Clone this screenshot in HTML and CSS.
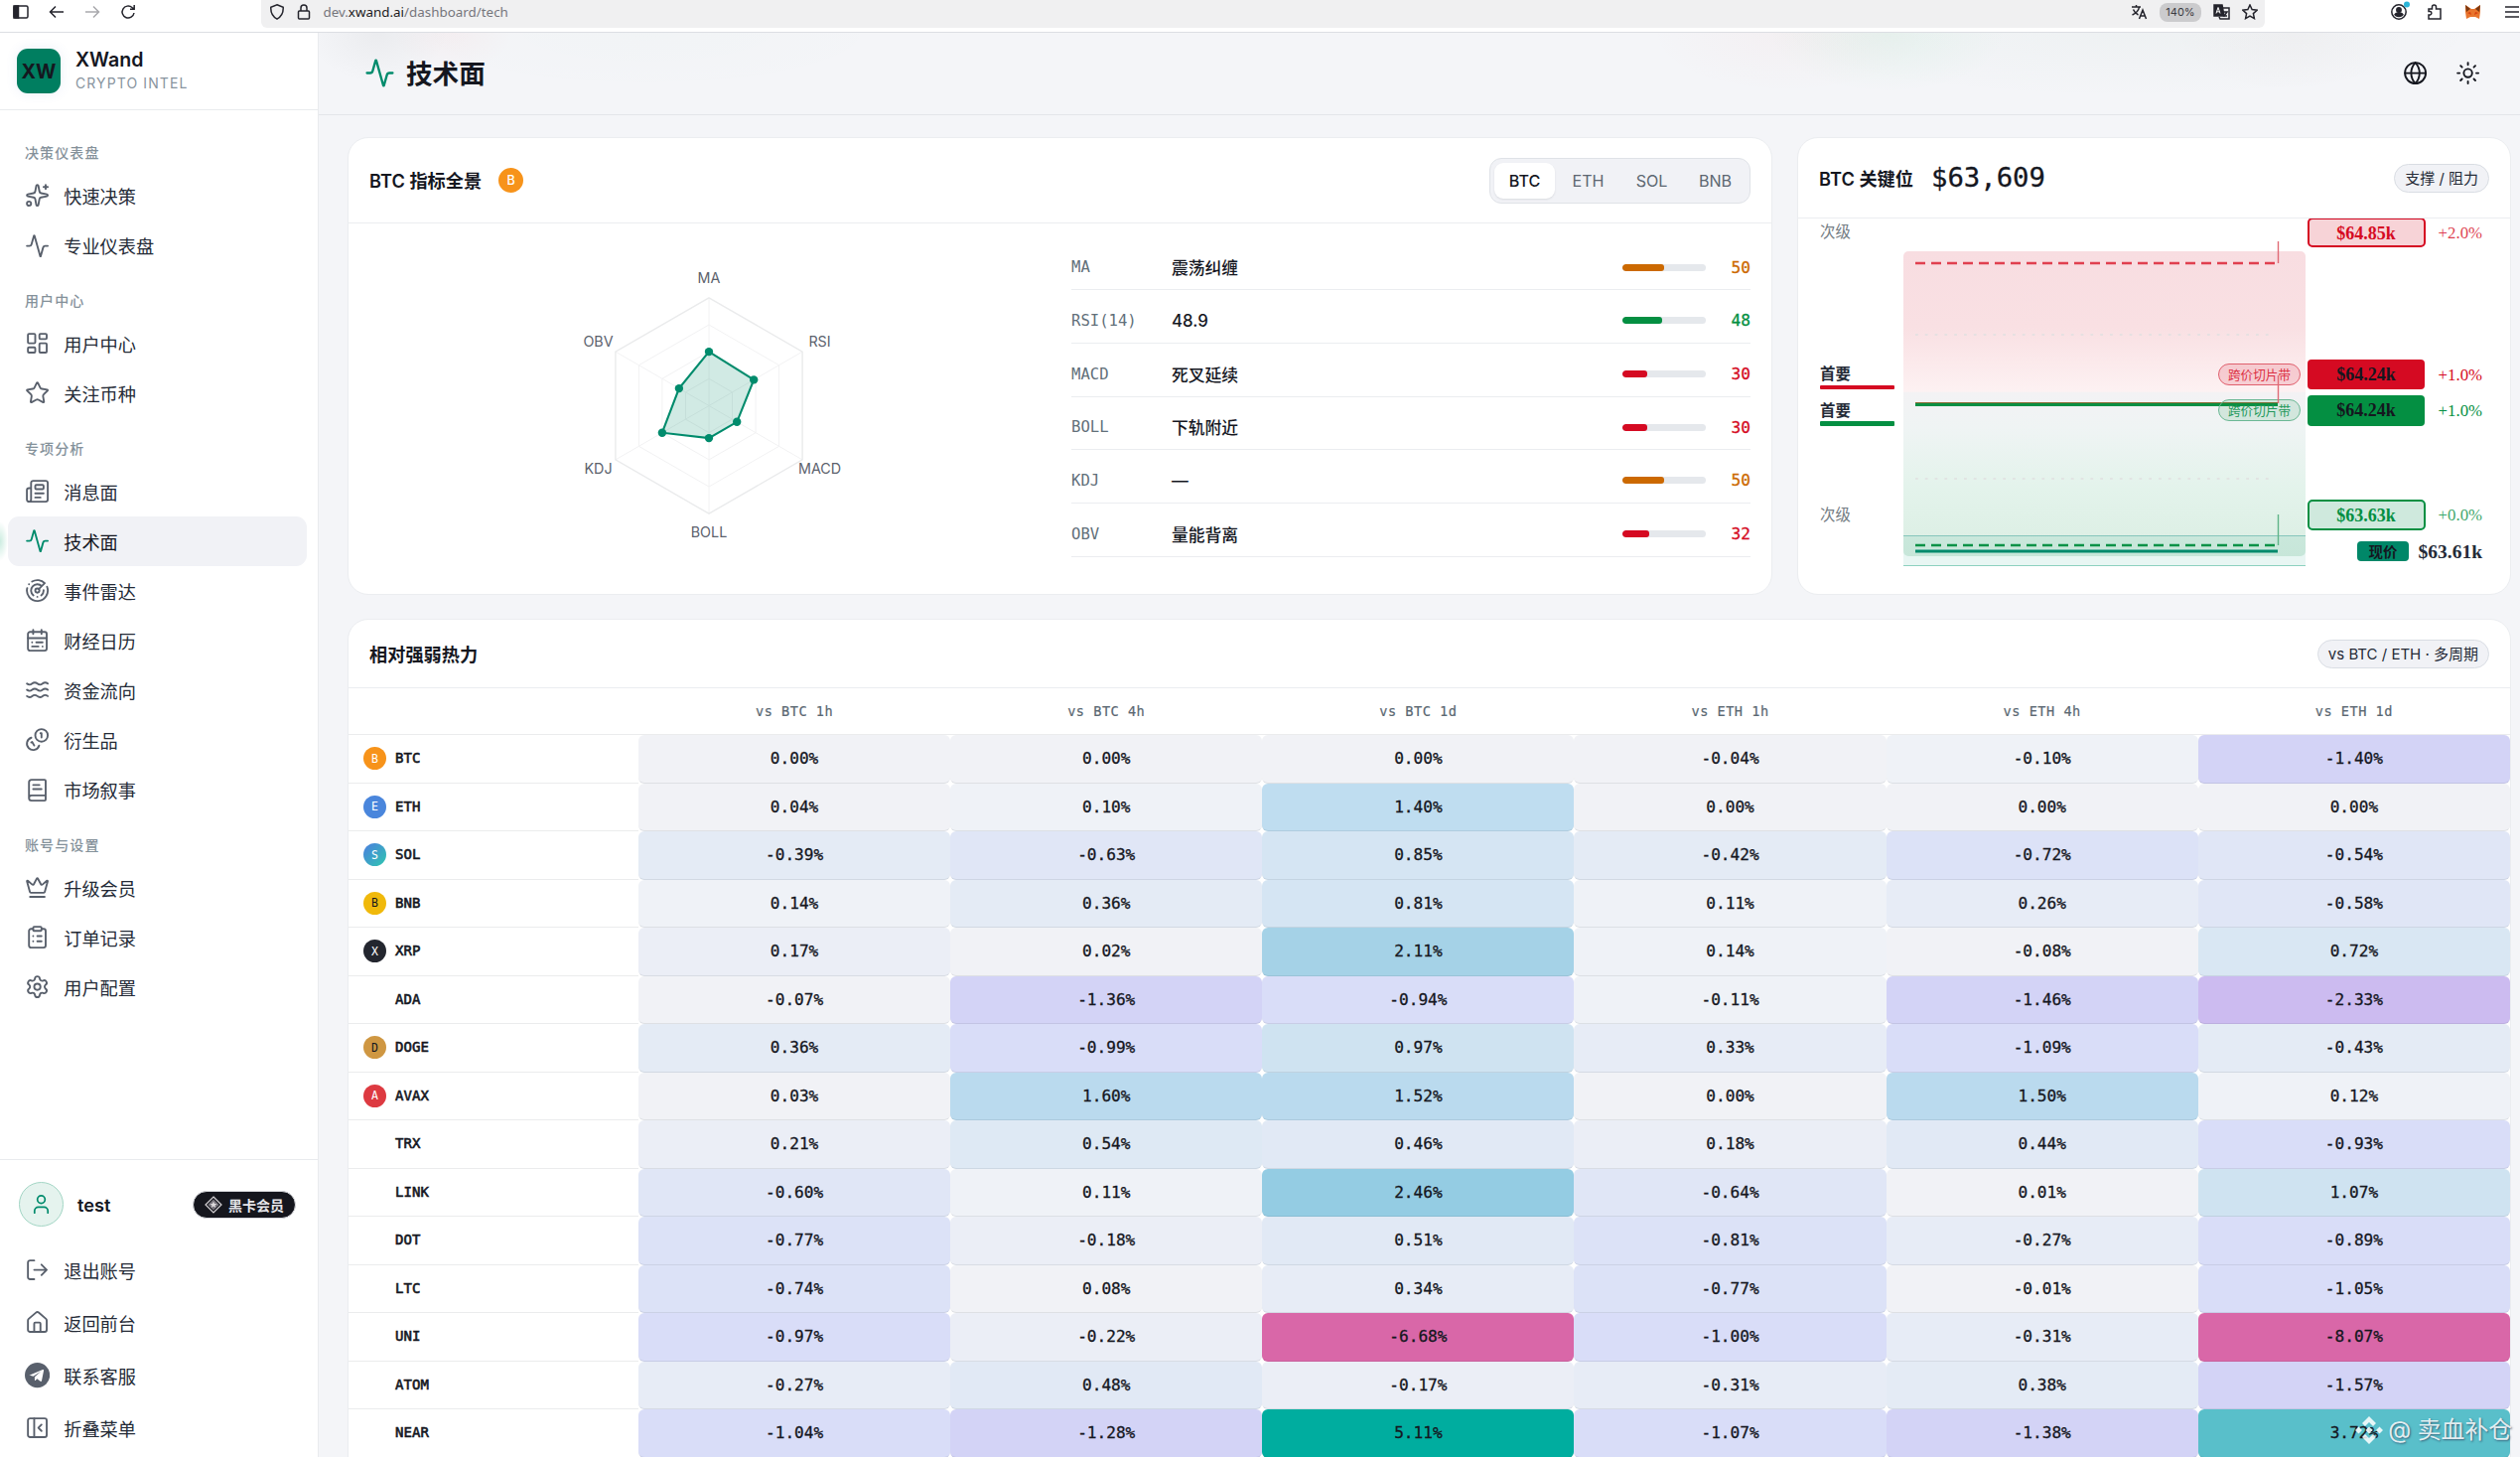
FILE: index.html
```html
<!DOCTYPE html>
<html lang="zh-CN">
<head>
    <meta charset="UTF-8">
    <meta name="viewport" content="width=device-width, initial-scale=1.0">
    <title>XWand - 技术面</title>
    <link rel="stylesheet" href="styles.css">
</head>
<body>
    <div class="browser-bar">
        <div class="browser-nav">
            <svg width="16" height="14" viewBox="0 0 16 14"><rect x="1" y="1" width="14" height="12" rx="1.5"/><path class="solid" d="M1 1h4.5v12H1z"/></svg>
            <svg width="16" height="14" viewBox="0 0 16 14"><path d="M15 7H1.5M7 1.5L1.5 7 7 12.5"/></svg>
            <svg class="muted" width="16" height="14" viewBox="0 0 16 14"><path d="M1 7h13.500M9 1.500L14.500 7 9 12.500"/></svg>
            <svg width="16" height="16" viewBox="0 0 16 16"><path d="M14 9a6 6 0 1 1-2-5.500l2 1.500M14.200 1v4.200H10"/></svg>
        </div>
        <div class="url-field">
            <svg width="16" height="16" viewBox="0 0 16 16"><path d="M8 .8l6.200 2.400c.3 5-1.500 9.500-6.200 12C3.300 12.700 1.500 8.200 1.800 3.200z"/></svg>
            <svg width="14" height="16" viewBox="0 0 14 16"><rect x="1.500" y="7" width="11" height="8" rx="1"/><path d="M4 7V4a3 3 0 0 1 6 0v3"/></svg>
            <span class="url">dev.<b>xwand.ai</b>/dashboard/tech</span>
            <div class="url-tools">
                <svg width="17" height="16" viewBox="0 0 17 16"><path d="M1 3h9M5.500 1v2M8.500 3C8 6 5 9.500 1.500 11M2.500 5.500c1 2.500 3 4.500 5 5.500M8.500 15l3.500-9 3.500 9M9.800 12h4.500"/></svg>
                <span class="zoom-level">140%</span>
                <svg width="17" height="16" viewBox="0 0 17 16"><path class="solid" d="M1 1h8l2 11H1z"/><path d="M9 4h7v11H7l-1-2"/><path d="M11 8h3l-3 4h3"/><path class="light" d="M3 9.500l2-6 2 6M3.600 7.800h2.800"/></svg>
                <svg width="16" height="16" viewBox="0 0 16 16"><path d="M8 1l2.100 4.600 5 .6-3.700 3.400 1 5L8 12.100 3.600 14.600l1-5L.9 6.200l5-.6z"/></svg>
            </div>
        </div>
        <div class="browser-ext">
            <svg width="19" height="20" viewBox="0 0 19 20"><circle cx="8" cy="11" r="7.200"/><circle class="solid" cx="8" cy="9" r="2.200"/><path class="solid" d="M4 13.500c1-2 7-2 8 0-1 2.500-7 2.500-8 0z"/><circle class="dot" cx="16" cy="3.500" r="3"/></svg>
            <svg width="14" height="16" viewBox="0 0 14 16"><path d="M1 5h3.500V3a2 2 0 0 1 4 0v2H13v10H1v-4h1.500a1.800 1.800 0 0 0 0-3.500H1z"/></svg>
            <svg class="fox" width="17" height="16" viewBox="0 0 17 16"><path fill="#e8752d" d="M1 1l6 4h3l6-4v7l-1 7-4-2H6l-4 2-1-7z"/><path fill="#7a3a14" d="M1 1l5 4-4 3zM16 1l-5 4 4 3z"/><path fill="#d7410f" d="M3 9l3-1 1 3zM14 9l-3-1-1 3z"/></svg>
            <svg width="16" height="14" viewBox="0 0 16 14"><path d="M1 2h14M1 7h14M1 12h14"/></svg>
        </div>
    </div>

    <div class="app">
        <aside class="sidebar">
            <div class="brand">
                <div class="brand-logo">XW</div>
                <div class="brand-text">
                    <div class="brand-name">XWand</div>
                    <div class="brand-sub">CRYPTO INTEL</div>
                </div>
            </div>

            <nav class="nav">
                <div class="nav-label">决策仪表盘</div>
                <a class="nav-item"><svg class="icon" viewBox="0 0 24 24"><path d="M11.017 2.814a1 1 0 0 1 1.966 0l1.051 5.558a2 2 0 0 0 1.594 1.594l5.558 1.051a1 1 0 0 1 0 1.966l-5.558 1.051a2 2 0 0 0-1.594 1.594l-1.051 5.558a1 1 0 0 1-1.966 0l-1.051-5.558a2 2 0 0 0-1.594-1.594l-5.558-1.051a1 1 0 0 1 0-1.966l5.558-1.051a2 2 0 0 0 1.594-1.594zM20 2v4M22 4h-4"/><circle cx="4" cy="20" r="2"/></svg>快速决策</a>
                <a class="nav-item"><svg class="icon" viewBox="0 0 24 24"><path d="M22 12h-2.480a2 2 0 0 0-1.930 1.460l-2.350 8.360a.25.25 0 0 1-.48 0L9.240 2.180a.25.25 0 0 0-.48 0l-2.350 8.360A2 2 0 0 1 4.490 12H2"/></svg>专业仪表盘</a>

                <div class="nav-label">用户中心</div>
                <a class="nav-item"><svg class="icon" viewBox="0 0 24 24"><rect width="7" height="9" x="3" y="3" rx="1"/><rect width="7" height="5" x="14" y="3" rx="1"/><rect width="7" height="9" x="14" y="12" rx="1"/><rect width="7" height="5" x="3" y="16" rx="1"/></svg>用户中心</a>
                <a class="nav-item"><svg class="icon" viewBox="0 0 24 24"><path d="M11.525 2.295a.53.53 0 0 1 .95 0l2.310 4.679a2.123 2.123 0 0 0 1.595 1.160l5.166.756a.53.53 0 0 1 .294.904l-3.736 3.638a2.123 2.123 0 0 0-.611 1.878l.882 5.140a.53.53 0 0 1-.771.560l-4.618-2.428a2.122 2.122 0 0 0-1.973 0L6.396 21.010a.53.53 0 0 1-.770-.560l.881-5.139a2.122 2.122 0 0 0-.611-1.879L2.160 9.795a.53.53 0 0 1 .294-.906l5.165-.755a2.122 2.122 0 0 0 1.597-1.160z"/></svg>关注币种</a>

                <div class="nav-label">专项分析</div>
                <a class="nav-item"><svg class="icon" viewBox="0 0 24 24"><path d="M15 18h-5M18 14h-8M4 22h16a2 2 0 0 0 2-2V4a2 2 0 0 0-2-2H8a2 2 0 0 0-2 2v16a2 2 0 0 1-4 0v-9a2 2 0 0 1 2-2h2"/><rect width="8" height="4" x="10" y="6" rx="1"/></svg>消息面</a>
                <a class="nav-item active"><svg class="icon" viewBox="0 0 24 24"><path d="M22 12h-2.480a2 2 0 0 0-1.930 1.460l-2.350 8.360a.25.25 0 0 1-.48 0L9.240 2.180a.25.25 0 0 0-.48 0l-2.350 8.360A2 2 0 0 1 4.490 12H2"/></svg>技术面</a>
                <a class="nav-item"><svg class="icon" viewBox="0 0 24 24"><path d="M19.070 4.930A10 10 0 0 0 6.990 3.340M4 6h.01M2.290 9.620A10 10 0 1 0 21.310 8.350M16.240 7.760A6 6 0 1 0 8.230 16.670M12 18h.01M17.990 11.660A6 6 0 0 1 15.770 16.670M13.410 10.590l5.660-5.660"/><circle cx="12" cy="12" r="2"/></svg>事件雷达</a>
                <a class="nav-item"><svg class="icon" viewBox="0 0 24 24"><rect width="18" height="18" x="3" y="4" rx="2"/><path d="M16 2v4M3 10h18M8 2v4M17 14h-6M13 18H7M7 14h.01M17 18h.01"/></svg>财经日历</a>
                <a class="nav-item"><svg class="icon" viewBox="0 0 24 24"><path d="M2 6c.6.5 1.200 1 2.500 1C7 7 7 5 9.500 5c2.600 0 2.400 2 5 2 2.500 0 2.500-2 5-2 1.300 0 1.900.5 2.500 1M2 12c.6.5 1.200 1 2.500 1 2.500 0 2.500-2 5-2 2.600 0 2.400 2 5 2 2.500 0 2.500-2 5-2 1.300 0 1.900.5 2.500 1M2 18c.6.5 1.200 1 2.500 1 2.500 0 2.500-2 5-2 2.600 0 2.400 2 5 2 2.500 0 2.500-2 5-2 1.300 0 1.900.5 2.500 1"/></svg>资金流向</a>
                <a class="nav-item"><svg class="icon" viewBox="0 0 24 24"><path d="M13.744 17.736a6 6 0 1 1-7.480-7.480M15 6h1v4M6.134 14.768l.866-.5 2 3.464"/><circle cx="16" cy="8" r="6"/></svg>衍生品</a>
                <a class="nav-item"><svg class="icon" viewBox="0 0 24 24"><path d="M4 19.500v-15A2.500 2.500 0 0 1 6.500 2H19a1 1 0 0 1 1 1v18a1 1 0 0 1-1 1H6.500a1 1 0 0 1 0-5H20M8 11h8M8 7h6"/></svg>市场叙事</a>

                <div class="nav-label">账号与设置</div>
                <a class="nav-item"><svg class="icon" viewBox="0 0 24 24"><path d="M11.562 3.266a.5.5 0 0 1 .876 0L15.390 8.870a1 1 0 0 0 1.516.294L21.183 5.500a.5.5 0 0 1 .798.519l-2.834 10.246a1 1 0 0 1-.956.734H5.810a1 1 0 0 1-.957-.734L2.020 6.020a.5.5 0 0 1 .798-.519l4.276 3.664a1 1 0 0 0 1.516-.294zM5 21h14"/></svg>升级会员</a>
                <a class="nav-item"><svg class="icon" viewBox="0 0 24 24"><rect width="8" height="4" x="8" y="2" rx="1"/><path d="M16 4h2a2 2 0 0 1 2 2v14a2 2 0 0 1-2 2H6a2 2 0 0 1-2-2V6a2 2 0 0 1 2-2h2M12 11h4M12 16h4M8 11h.01M8 16h.01"/></svg>订单记录</a>
                <a class="nav-item"><svg class="icon" viewBox="0 0 24 24"><path d="M9.671 4.136a2.340 2.340 0 0 1 4.659 0 2.340 2.340 0 0 0 3.319 1.915 2.340 2.340 0 0 1 2.330 4.033 2.340 2.340 0 0 0 0 3.831 2.340 2.340 0 0 1-2.330 4.033 2.340 2.340 0 0 0-3.319 1.915 2.340 2.340 0 0 1-4.659 0 2.340 2.340 0 0 0-3.320-1.915 2.340 2.340 0 0 1-2.330-4.033 2.340 2.340 0 0 0 0-3.831A2.340 2.340 0 0 1 6.350 6.051a2.340 2.340 0 0 0 3.319-1.915"/><circle cx="12" cy="12" r="3"/></svg>用户配置</a>
            </nav>

            <div class="sidebar-footer">
                <div class="user">
                    <div class="avatar"><svg class="icon" viewBox="0 0 24 24"><path d="M19 21v-2a4 4 0 0 0-4-4H9a4 4 0 0 0-4 4v2"/><circle cx="12" cy="7" r="4"/></svg></div>
                    <span class="user-name">test</span>
                    <span class="member-badge"><svg width="18" height="18" viewBox="0 0 18 18"><path fill="none" stroke="#d6d3d6" stroke-width="1.200" d="M9 1l8 8-8 8-8-8z"/><path fill="#77737c" d="M9 3.500L14.500 9 9 14.500 3.500 9z"/><path fill="#dedbdd" d="M9 5.500l1 2.500h2.500l-2 1.500.8 2.500L9 10.500 6.700 12l.8-2.500-2-1.500H8z"/></svg>黑卡会员</span>
                </div>
                <a class="nav-item"><svg class="icon" viewBox="0 0 24 24"><path d="M16 17l5-5-5-5M21 12H9M9 21H5a2 2 0 0 1-2-2V5a2 2 0 0 1 2-2h4"/></svg>退出账号</a>
                <a class="nav-item"><svg class="icon" viewBox="0 0 24 24"><path d="M15 21v-8a1 1 0 0 0-1-1h-4a1 1 0 0 0-1 1v8"/><path d="M3 10a2 2 0 0 1 .709-1.528l7-6a2 2 0 0 1 2.582 0l7 6A2 2 0 0 1 21 10v9a2 2 0 0 1-2 2H5a2 2 0 0 1-2-2z"/></svg>返回前台</a>
                <a class="nav-item"><svg class="icon icon-telegram" viewBox="0 0 24 24"><circle cx="12" cy="12" r="12"/><path d="M4.800 11.800l12.400-5.100c.7-.3 1.100.1 1 .8l-2 9.800c-.2.8-.7.9-1.300.6l-3.200-2.400-1.600 1.600c-.3.3-.6.2-.6-.3l-.1-2.900 6-5.500-7.300 4.700-3.300-1c-.6-.1-.6-.1 0-.3z"/></svg>联系客服</a>
                <a class="nav-item"><svg class="icon" viewBox="0 0 24 24"><rect width="18" height="18" x="3" y="3" rx="2"/><path d="M9 3v18M16 15l-3-3 3-3"/></svg>折叠菜单</a>
            </div>
        </aside>

        <main class="main">
            <header class="page-header">
                <svg class="icon title-icon" viewBox="0 0 24 24"><path d="M22 12h-2.480a2 2 0 0 0-1.930 1.460l-2.350 8.360a.25.25 0 0 1-.48 0L9.240 2.180a.25.25 0 0 0-.48 0l-2.350 8.360A2 2 0 0 1 4.490 12H2"/></svg>
                <h1>技术面</h1>
                <div class="header-actions">
                    <svg class="icon" viewBox="0 0 24 24"><circle cx="12" cy="12" r="10"/><path d="M12 2a14.500 14.500 0 0 0 0 20 14.500 14.500 0 0 0 0-20M2 12h20"/></svg>
                    <svg class="icon" viewBox="0 0 24 24"><circle cx="12" cy="12" r="4"/><path d="M12 2v2M12 20v2M4.930 4.930l1.410 1.410M17.660 17.660l1.410 1.410M2 12h2M20 12h2M6.340 17.660l-1.410 1.410M19.070 4.930l-1.410 1.410"/></svg>
                </div>
            </header>

            <div class="content">
                <section class="card overview-card">
                    <div class="card-header">
                        <h2>BTC 指标全景</h2>
                        <span class="coin coin-lg btc">B</span>
                        <div class="tabs">
                            <span class="tab active">BTC</span>
                            <span class="tab">ETH</span>
                            <span class="tab">SOL</span>
                            <span class="tab">BNB</span>
                        </div>
                    </div>
                    <div class="overview-body">
                        <svg class="radar" viewBox="-363 -183.500 728 375">
                            <g class="radar-grid">
                                <path d="M0-27.200L23.500-13.600V13.600L0 27.200-23.500 13.600V-13.600zM0-54.400L47.100-27.200V27.200L0 54.400-47.100 27.200V-27.200zM0-81.500L70.600-40.800V40.800L0 81.500-70.600 40.800V-40.800z"/>
                                <path d="M0-108.700V108.700M-94.100-54.400L94.100 54.400M-94.100 54.400L94.100-54.400"/>
                                <path class="outer" d="M0-108.700L94.100-54.400V54.400L0 108.700-94.100 54.400V-54.400z"/>
                            </g>
                            <path class="radar-area" d="M0-54.400L45.200-26.100 28.200 16.300 0 32.600-47.100 27.200-30.100-17.400z"/>
                            <g class="radar-dots">
                                <circle cx="0" cy="-54.400" r="4.200"/><circle cx="45.200" cy="-26.100" r="4.200"/><circle cx="28.200" cy="16.300" r="4.200"/>
                                <circle cx="0" cy="32.600" r="4.200"/><circle cx="-47.100" cy="27.200" r="4.200"/><circle cx="-30.100" cy="-17.400" r="4.200"/>
                            </g>
                            <g class="radar-labels">
                                <text x="0" y="-124">MA</text><text x="111.500" y="-59.800">RSI</text><text x="111.500" y="68.500">MACD</text>
                                <text x="0" y="132">BOLL</text><text x="-111.500" y="68.500">KDJ</text><text x="-111.500" y="-59.800">OBV</text>
                            </g>
                        </svg>
                        <div class="indicators">
                            <div class="indicator mid"><span class="ind-name">MA</span><span class="ind-value">震荡纠缠</span><span class="ind-bar"><i style="width: 50%"></i></span><span class="ind-score">50</span></div>
                            <div class="indicator up"><span class="ind-name">RSI(14)</span><span class="ind-value">48.9</span><span class="ind-bar"><i style="width: 48%"></i></span><span class="ind-score">48</span></div>
                            <div class="indicator down"><span class="ind-name">MACD</span><span class="ind-value">死叉延续</span><span class="ind-bar"><i style="width: 30%"></i></span><span class="ind-score">30</span></div>
                            <div class="indicator down"><span class="ind-name">BOLL</span><span class="ind-value">下轨附近</span><span class="ind-bar"><i style="width: 30%"></i></span><span class="ind-score">30</span></div>
                            <div class="indicator mid"><span class="ind-name">KDJ</span><span class="ind-value">—</span><span class="ind-bar"><i style="width: 50%"></i></span><span class="ind-score">50</span></div>
                            <div class="indicator down"><span class="ind-name">OBV</span><span class="ind-value">量能背离</span><span class="ind-bar"><i style="width: 32%"></i></span><span class="ind-score">32</span></div>
                        </div>
                    </div>
                </section>

                <section class="card levels-card">
                    <div class="card-header">
                        <h2>BTC 关键位</h2>
                        <span class="price">$63,609</span>
                        <span class="pill">支撑 / 阻力</span>
                    </div>
                    <svg class="levels" viewBox="0 0 716 379">
                        <defs>
                            <linearGradient id="zone" x1="0" y1="0" x2="0" y2="1">
                                <stop offset="0" stop-color="#f8dde1"/>
                                <stop offset=".25" stop-color="#f9e0e3"/>
                                <stop offset=".46" stop-color="#fdf1f2"/>
                                <stop offset=".463" stop-color="#f3f2f4"/>
                                <stop offset=".58" stop-color="#eff4f4"/>
                                <stop offset=".78" stop-color="#e3f3eb"/>
                                <stop offset="1" stop-color="#dbeee3"/>
                            </linearGradient>
                        </defs>
                        <rect x="106" y="33" width="405" height="307" rx="5" fill="url(#zone)"/>
                        <rect x="106" y="319.500" width="405" height="30" fill="#009878" fill-opacity=".09"/>
                        <path d="M106 319.500h405" stroke="#85c5bb"/>
                        <path d="M106 349.500h405" stroke="#8ed1c0"/>
                        <path d="M118 117h360M118 262h360" stroke="#dfdfe0" stroke-width="1.400" stroke-dasharray="2.800 7"/>
                        <path d="M118 45h365" stroke="#e0404f" stroke-width="2.600" stroke-dasharray="10 6"/>
                        <path d="M118 187h365" stroke="#8b6b35" stroke-width="4"/>
                        <path d="M118 187.500h365" stroke="#0a8f43" stroke-width="3"/>
                        <path d="M118 329h365" stroke="#0a9247" stroke-width="2.400" stroke-dasharray="10 6"/>
                        <path d="M118 335h365" stroke="#008a6c" stroke-width="3"/>

                        <g class="tag red"><rect x="423.500" y="146.500" width="82" height="21" rx="10.500"/><text x="464.500" y="162">跨价切片带</text></g>
                        <g class="tag green"><rect x="423.500" y="182.500" width="82" height="21" rx="10.500"/><text x="464.500" y="198">跨价切片带</text></g>
                        <path d="M483.500 23v22M483.500 158v28" stroke="#e06a75" stroke-width="1.400"/>
                        <path d="M483.500 298v31" stroke="#5fb488" stroke-width="1.400"/>

                        <text class="tier" x="22" y="19">次级</text>
                        <text class="tier main" x="22" y="162">首要</text>
                        <rect x="22" y="168" width="75" height="4" rx="1" fill="#d50a22"/>
                        <text class="tier main" x="22" y="199">首要</text>
                        <rect x="22" y="204" width="75" height="5" rx="1" fill="#048f42"/>
                        <text class="tier" x="22" y="304">次级</text>

                        <rect x="514" y="0" width="117" height="28" rx="4" fill="#f7d3d7" stroke="#d50a22" stroke-width="2"/>
                        <rect x="513" y="142" width="118" height="30" rx="4" fill="#d50a22"/>
                        <rect x="513" y="178" width="118" height="31" rx="4" fill="#048f42"/>
                        <rect x="514" y="284" width="117" height="29" rx="4" fill="#cfe9dd" stroke="#048f42" stroke-width="2"/>
                        <g class="level-price">
                            <text class="resist" x="572" y="21">$64.85k</text>
                            <text x="572" y="163">$64.24k</text>
                            <text x="572" y="199">$64.24k</text>
                            <text class="support" x="572" y="305">$63.63k</text>
                        </g>
                        <g class="level-change">
                            <text class="resist minor" x="689" y="20">+2.0%</text>
                            <text class="resist" x="689" y="163">+1.0%</text>
                            <text class="support" x="689" y="199">+1.0%</text>
                            <text class="support minor" x="689" y="304">+0.0%</text>
                        </g>
                        <rect x="563" y="325" width="52" height="20" rx="4" fill="#008768"/>
                        <text class="now-label" x="589" y="340.500">现价</text>
                        <text class="now-price" x="689" y="341.500">$63.61k</text>
                    </svg>
                </section>

                <section class="card heat-card">
                    <div class="card-header">
                        <h2>相对强弱热力</h2>
                        <span class="pill">vs BTC / ETH · 多周期</span>
                    </div>
                    <table class="heat">
                        <thead>
                            <tr><th class="sym"></th><th>vs BTC 1h</th><th>vs BTC 4h</th><th>vs BTC 1d</th><th>vs ETH 1h</th><th>vs ETH 4h</th><th>vs ETH 1d</th></tr>
                        </thead>
                        <tbody>
                            <tr><th><span class="coin btc">B</span>BTC</th><td>0.00%</td><td>0.00%</td><td>0.00%</td><td>-0.04%</td><td class="h1">-0.10%</td><td class="n4">-1.40%</td></tr>
                            <tr><th><span class="coin eth">E</span>ETH</th><td>0.04%</td><td class="h1">0.10%</td><td class="p5">1.40%</td><td>0.00%</td><td>0.00%</td><td>0.00%</td></tr>
                            <tr><th><span class="coin sol">S</span>SOL</th><td class="h4">-0.39%</td><td class="n1">-0.63%</td><td class="p3">0.85%</td><td class="h4">-0.42%</td><td class="n2">-0.72%</td><td class="n1">-0.54%</td></tr>
                            <tr><th><span class="coin bnb">B</span>BNB</th><td class="h1">0.14%</td><td class="h4">0.36%</td><td class="p3">0.81%</td><td class="h1">0.11%</td><td class="h3">0.26%</td><td class="n1">-0.58%</td></tr>
                            <tr><th><span class="coin xrp">X</span>XRP</th><td class="h2">0.17%</td><td>0.02%</td><td class="p7">2.11%</td><td class="h1">0.14%</td><td>-0.08%</td><td class="p2">0.72%</td></tr>
                            <tr><th><span class="coin"></span>ADA</th><td>-0.07%</td><td class="n4">-1.36%</td><td class="n3">-0.94%</td><td class="h1">-0.11%</td><td class="n4">-1.46%</td><td class="n5">-2.33%</td></tr>
                            <tr><th><span class="coin doge">D</span>DOGE</th><td class="h4">0.36%</td><td class="n3">-0.99%</td><td class="p4">0.97%</td><td class="h3">0.33%</td><td class="n3">-1.09%</td><td class="h4">-0.43%</td></tr>
                            <tr><th><span class="coin avax">A</span>AVAX</th><td>0.03%</td><td class="p6">1.60%</td><td class="p6">1.52%</td><td>0.00%</td><td class="p6">1.50%</td><td class="h1">0.12%</td></tr>
                            <tr><th><span class="coin"></span>TRX</th><td class="h2">0.21%</td><td class="p1">0.54%</td><td class="h5">0.46%</td><td class="h2">0.18%</td><td class="h5">0.44%</td><td class="n3">-0.93%</td></tr>
                            <tr><th><span class="coin"></span>LINK</th><td class="n1">-0.60%</td><td class="h1">0.11%</td><td class="p8">2.46%</td><td class="n1">-0.64%</td><td>0.01%</td><td class="p4">1.07%</td></tr>
                            <tr><th><span class="coin"></span>DOT</th><td class="n2">-0.77%</td><td class="h2">-0.18%</td><td class="h5">0.51%</td><td class="n2">-0.81%</td><td class="h3">-0.27%</td><td class="n3">-0.89%</td></tr>
                            <tr><th><span class="coin"></span>LTC</th><td class="n2">-0.74%</td><td>0.08%</td><td class="h3">0.34%</td><td class="n2">-0.77%</td><td>-0.01%</td><td class="n3">-1.05%</td></tr>
                            <tr><th><span class="coin"></span>UNI</th><td class="n3">-0.97%</td><td class="h2">-0.22%</td><td class="n6">-6.68%</td><td class="n3">-1.00%</td><td class="h3">-0.31%</td><td class="n6">-8.07%</td></tr>
                            <tr><th><span class="coin"></span>ATOM</th><td class="h3">-0.27%</td><td class="h5">0.48%</td><td class="h2">-0.17%</td><td class="h3">-0.31%</td><td class="h4">0.38%</td><td class="n4">-1.57%</td></tr>
                            <tr><th><span class="coin"></span>NEAR</th><td class="n3">-1.04%</td><td class="n4">-1.28%</td><td class="p10">5.11%</td><td class="n3">-1.07%</td><td class="n4">-1.38%</td><td class="p9">3.72%</td></tr>
                        </tbody>
                    </table>
                </section>
            </div>
        </main>
    </div>

    <div class="watermark">
        <svg width="28" height="28" viewBox="0 0 28 28"><path d="M14 0l7 7-3 3-4-4-4 4-3-3zM14 28l7-7-3-3-4 4-4-4-3 3zM14 10.500l3.500 3.500-3.500 3.500-3.500-3.500zM3.500 10.500L7 14l-3.500 3.500L0 14zM24.500 10.500L28 14l-3.500 3.500L21 14z"/></svg>
        <span>@ 卖血补仓</span>
    </div>
</body>
</html>
```
FILE: styles.css
```css
* {
    margin: 0;
    padding: 0;
    box-sizing: border-box;
}

body {
    font-family: Inter, 'Noto Sans CJK SC', sans-serif;
    background: #f4f5f8;
    color: #15171f;
    width: 100%;
    height: 100vh;
    overflow: hidden;
    position: relative;
    display: flex;
    flex-direction: column;
}

.icon {
    width: 25.2px;
    height: 25.2px;
    flex-shrink: 0;
    fill: none;
    stroke: currentColor;
    stroke-width: 1.8;
    stroke-linecap: round;
    stroke-linejoin: round;
}

/* browser toolbar */
.browser-bar {
    height: 33px;
    flex-shrink: 0;
    background: #fff;
    border-bottom: 1px solid #dcdee3;
    display: flex;
    align-items: flex-start;
    overflow: hidden;
}

.browser-bar svg {
    flex-shrink: 0;
    fill: none;
    stroke: #24242c;
    stroke-width: 1.5;
}

.browser-bar .solid {
    fill: #24242c;
}

.browser-bar .light {
    stroke: #fff;
    stroke-width: 1;
}

.browser-bar .muted {
    stroke: #a9a9ad;
}

.browser-bar .dot {
    fill: #2bb5d8;
    stroke: none;
}

.browser-bar .fox {
    stroke: none;
}

.browser-nav {
    width: 264px;
    height: 24px;
    padding-left: 13px;
    display: flex;
    align-items: center;
    gap: 20px;
}

.url-field {
    width: 2022px;
    height: 28px;
    padding: 0 4px 4px 8px;
    background: #f0f0f1;
    border-radius: 0 0 6px 6px;
    display: flex;
    align-items: center;
    gap: 12px;
}

.url {
    font-family: 'Noto Sans', sans-serif;
    font-size: 13.4px;
    color: #76767c;
}

.url b {
    font-weight: 400;
    color: #1b1b22;
}

.url-tools {
    margin-left: auto;
    padding-right: 3px;
    display: flex;
    align-items: center;
    gap: 12px;
}

.zoom-level {
    width: 42px;
    height: 19px;
    border-radius: 8px;
    background: #cbcbcd;
    font-size: 11px;
    line-height: 19px;
    text-align: center;
    color: #3a3a40;
}

.browser-ext {
    height: 24px;
    margin-left: 127px;
    display: flex;
    align-items: center;
    gap: 20px;
}

.browser-ext svg:first-child {
    margin-top: -2px;
    margin-right: -2px;
}

.browser-ext svg:nth-child(3) {
    margin-left: 3px;
}

.browser-ext svg:last-child {
    margin-left: 3px;
}

.app {
    flex: 1;
    min-height: 0;
    display: flex;
}

/* sidebar */
.sidebar {
    width: 321px;
    flex-shrink: 0;
    background: #fff;
    border-right: 1px solid #e9ebee;
    display: flex;
    flex-direction: column;
}

.brand {
    height: 78px;
    padding: 0 17px 1px;
    border-bottom: 1px solid #e9ebee;
    display: flex;
    align-items: center;
    gap: 15px;
}

.brand-logo {
    width: 44px;
    height: 45px;
    border-radius: 11px;
    background: #007e60;
    box-shadow: 0 0 12px rgba(90, 120, 200, 0.12);
    font-size: 19.6px;
    font-weight: 700;
    line-height: 46px;
    text-align: center;
}

.brand-name {
    font-size: 19.6px;
    font-weight: 600;
    line-height: 26px;
}

.brand-sub {
    font-size: 14px;
    line-height: 22px;
    letter-spacing: 1.1px;
    color: #88949e;
}

.nav {
    flex: 1;
    padding: 12.4px 11px 0 8px;
}

.nav-label {
    padding: 20.6px 17px 8px;
    font-size: 14px;
    font-weight: 500;
    line-height: 20px;
    letter-spacing: 1.1px;
    color: #84919a;
}

.nav-item {
    height: 50.1px;
    padding-left: 17px;
    border-radius: 11px;
    display: flex;
    align-items: center;
    gap: 14px;
    font-size: 18.2px;
    color: #252b37;
}

.nav-item .icon {
    color: #59606c;
}

.nav-item.active {
    position: relative;
    background: #f1f2f6;
    color: #15171f;
}

/* soft glow on the left edge of the current item */
.nav-item.active::before {
    content: '';
    position: absolute;
    left: -8px;
    top: 5px;
    width: 8px;
    height: 40px;
    background: radial-gradient(8px 20px at 0 50%, rgba(0, 160, 100, 0.2), transparent);
}

.nav-item.active .icon {
    color: #008b6c;
}

.nav-item .icon-telegram {
    stroke: none;
    fill: #59606c;
}

.icon-telegram path {
    fill: #fff;
}

.sidebar-footer {
    height: 300px;
    padding: 22px 11px 0 8px;
    border-top: 1px solid #e9ebee;
}

.sidebar-footer .nav-item {
    height: 53px;
}

.user {
    height: 45px;
    margin-bottom: 17.5px;
    padding: 0 11px;
    display: flex;
    align-items: center;
}

.avatar {
    width: 45px;
    height: 45px;
    margin-right: 14px;
    border: 1px solid #a3d6c5;
    border-radius: 50%;
    background: #e5f3ee;
    color: #008b6c;
    display: flex;
    align-items: center;
    justify-content: center;
}

.avatar .icon {
    width: 23px;
    height: 23px;
}

.user-name {
    font-size: 18.2px;
    font-weight: 600;
}

.member-badge {
    width: 104px;
    height: 28px;
    margin-left: auto;
    border: 1px solid #d7d8dc;
    border-radius: 14px;
    background: #15161d;
    color: #e6e6ea;
    font-size: 14px;
    font-weight: 600;
    display: flex;
    align-items: center;
    justify-content: center;
    gap: 6px;
}

/* main */
.main {
    flex: 1;
    min-width: 0;
}

.page-header {
    height: 83px;
    padding: 0 40px 1px 46px;
    border-bottom: 1px solid #e3e5e9;
    background:
        radial-gradient(70px 50px at 60px 0, rgba(60, 60, 60, 0.05), transparent),
        radial-gradient(60px 40px at 135px 0, rgba(255, 70, 70, 0.04), transparent),
        radial-gradient(260px 60px at 330px 0, rgba(0, 150, 60, 0.012), transparent),
        radial-gradient(140px 60px at 1480px 0, rgba(230, 70, 60, 0.03), transparent),
        radial-gradient(120px 60px at 1580px 0, rgba(0, 190, 80, 0.05), transparent),
        radial-gradient(360px 65px at 1820px 0, rgba(60, 130, 80, 0.03), transparent),
        radial-gradient(120px 60px at 1985px 0, rgba(120, 50, 40, 0.025), transparent),
        #f4f5f8;
    display: flex;
    align-items: center;
}

.title-icon {
    width: 31px;
    height: 31px;
    margin-right: 11px;
    color: #008b6c;
}

h1 {
    margin-top: -2px;
    font-size: 26.6px;
    font-weight: 700;
}

.header-actions {
    margin-left: auto;
    display: flex;
    gap: 28px;
}

.content {
    padding: 22px 9px 0 29px;
    display: grid;
    grid-template-columns: 1435px 1fr;
    gap: 24px 25px;
}

.card {
    background: #fff;
    border: 1px solid #ebedf0;
    border-radius: 21px;
    overflow: hidden;
    min-width: 0;
}

.card-header {
    height: 86px;
    padding: 0 21px;
    border-bottom: 1px solid #ebedf0;
    display: flex;
    align-items: center;
}

.card h2 {
    font-size: 18.2px;
    font-weight: 600;
    margin-top: -1px;
}

.overview-card,
.levels-card {
    height: 461px;
}

.levels-card .card-header {
    height: 81px;
}

.heat-card .card-header {
    height: 69px;
}

.pill {
    height: 29px;
    margin-left: auto;
    padding: 0 10px;
    border: 1px solid #d9dde3;
    border-radius: 15px;
    background: #f1f2f6;
    font-size: 15px;
    line-height: 27px;
    color: #252b37;
}

.price {
    margin-top: -1px;
    margin-left: 18px;
    font-family: 'DejaVu Sans Mono', monospace;
    font-size: 27.3px;
    -webkit-text-stroke: 0.3px;
}

.tabs {
    height: 46px;
    margin-left: auto;
    padding: 4px;
    border: 1px solid #dfe2e7;
    border-radius: 12px;
    background: #f1f2f6;
    display: flex;
    gap: 3px;
}

.tab {
    width: 61px;
    height: 36px;
    border-radius: 9px;
    font-size: 16.1px;
    line-height: 36px;
    text-align: center;
    color: #5d6771;
}

.tab.active {
    background: #fff;
    color: #15171f;
    font-weight: 500;
    box-shadow: 0 1px 2px rgba(20, 25, 40, 0.1);
}

.coin {
    width: 23px;
    height: 23px;
    border-radius: 50%;
    display: inline-flex;
    align-items: center;
    justify-content: center;
    font-family: 'DejaVu Sans Mono', monospace;
    font-size: 11.5px;
    font-weight: 400;
    color: #fff;
}

.coin-lg {
    width: 25px;
    height: 25px;
    margin-top: -1px;
    margin-left: 17px;
    font-family: Inter, sans-serif;
    font-size: 12.5px;
    font-weight: 500;
}

.btc { background: #f7931a; }
.eth { background: #4a86dc; }
.sol { background: linear-gradient(135deg, #4c7de0, #2fc7b0); }
.bnb { background: #f0b90b; color: #15171f; }
.xrp { background: #23262f; }
.doge { background: #cf9742; color: #15171f; }
.avax { background: #dd3a41; }

/* indicators */
.overview-body {
    height: 374px;
    display: flex;
}

.radar {
    width: 728px;
    height: 375px;
    flex-shrink: 0;
}

.radar-grid path {
    fill: none;
    stroke: #f2f2f3;
    stroke-width: 1;
}

.radar-grid .outer {
    stroke: #eaebec;
    stroke-width: 1.4;
}

.radar-area {
    fill: #008b6c;
    fill-opacity: 0.18;
    stroke: #008b6c;
    stroke-width: 2.1;
}

.radar-dots {
    fill: #008b6c;
}

.radar-labels {
    font-size: 14.3px;
    fill: #5c626d;
    text-anchor: middle;
}

.indicators {
    flex: 1;
    padding: 22px 21px 0 0;
    display: flex;
    flex-direction: column;
    gap: 8.4px;
}

.indicator {
    height: 45.3px;
    border-bottom: 1px solid #ebedf0;
    display: grid;
    grid-template-columns: 101px 1fr 84px 45px;
    align-items: center;
}

.ind-name {
    font-family: 'DejaVu Sans Mono', monospace;
    font-size: 15.6px;
    color: #62707a;
}

.ind-value {
    font-size: 16.8px;
    font-weight: 500;
}

.ind-bar {
    height: 7px;
    border-radius: 4px;
    background: #e5e8ec;
    overflow: hidden;
}

.ind-bar i {
    display: block;
    height: 100%;
    border-radius: 3px;
    background: currentColor;
}

.ind-score {
    font-family: 'DejaVu Sans Mono', monospace;
    font-size: 16.1px;
    text-align: right;
    -webkit-text-stroke: 0.3px;
}

.mid .ind-bar,
.mid .ind-score { color: #cc6900; }

.up .ind-bar,
.up .ind-score { color: #048f42; }

.down .ind-bar,
.down .ind-score { color: #d50a22; }

/* key levels */
.levels {
    display: block;
    width: 716px;
    height: 379px;
    fill: none;
}

.levels text {
    fill: #15171f;
}

.levels .resist {
    fill: #d50a22;
}

.levels .support {
    fill: #048f42;
}

.levels .minor {
    opacity: 0.78;
}

.levels .tier {
    font-size: 15.4px;
    fill: #757d84;
}

.levels .tier.main {
    font-weight: 700;
    fill: #252b37;
}

.tag text {
    font-size: 12.6px;
    text-anchor: middle;
}

.tag.red rect {
    fill: rgba(213, 10, 34, 0.14);
    stroke: #e0606e;
}

.levels .tag.red text {
    fill: #dc3043;
}

.tag.green rect {
    fill: rgba(4, 143, 66, 0.13);
    stroke: #6bb894;
}

.levels .tag.green text {
    fill: #23985b;
}

.level-price {
    font-family: 'Liberation Serif', serif;
    font-size: 18px;
    font-weight: 700;
    text-anchor: middle;
}

.level-change {
    font-family: 'Liberation Serif', serif;
    font-size: 16.8px;
    text-anchor: end;
    -webkit-text-stroke: 0.2px;
}

.now-label {
    font-size: 14.5px;
    font-weight: 700;
    text-anchor: middle;
}

.now-price {
    font-family: 'Liberation Serif', serif;
    font-size: 19.5px;
    font-weight: 700;
    text-anchor: end;
}

.levels .now-price {
    fill: #252b37;
}

/* relative strength heatmap */
.heat-card {
    grid-column: 1 / -1;
    height: 900px;
}

.heat {
    width: 100%;
    table-layout: fixed;
    border-collapse: separate;
    border-spacing: 0;
    font-family: 'DejaVu Sans Mono', monospace;
}

.heat th,
.heat td {
    height: 48.5px;
    border-bottom: 1px solid rgba(30, 40, 60, 0.09);
    text-align: center;
    vertical-align: middle;
}

.heat thead th {
    height: 47px;
    font-size: 13.6px;
    font-weight: 400;
    letter-spacing: 0.5px;
    color: #5b6872;
    -webkit-text-stroke: 0.2px;
}

.heat .sym {
    width: 292px;
}

.heat tbody th {
    padding-left: 15px;
    text-align: left;
    font-size: 14px;
    font-weight: 400;
    letter-spacing: 0.1px;
    -webkit-text-stroke: 0.6px;
}

.heat tbody .coin {
    margin-right: 9px;
    vertical-align: middle;
    letter-spacing: 0;
    -webkit-text-stroke: 0;
}

.heat td {
    border-radius: 6px;
    font-size: 16.1px;
    background-color: #f1f2f6;
    -webkit-text-stroke: 0.3px;
}

.heat .h1 { background-color: #eff2f7; }
.heat .h2 { background-color: #ebeef6; }
.heat .h3 { background-color: #e7ecf6; }
.heat .h4 { background-color: #e4ebf5; }
.heat .h5 { background-color: #e1e9f5; }
.heat .p1 { background-color: #dee9f4; }
.heat .p2 { background-color: #d9e7f3; }
.heat .p3 { background-color: #d5e5f3; }
.heat .p4 { background-color: #cfe3f1; }
.heat .p5 { background-color: #bfddf0; }
.heat .p6 { background-color: #badaee; }
.heat .p7 { background-color: #a5d2e7; }
.heat .p8 { background-color: #94cce3; }
.heat .p9 { background-color: #59bfca; }
.heat .p10 { background-color: #00ad9f; }
.heat .n1 { background-color: #e0e6f6; }
.heat .n2 { background-color: #dce2f7; }
.heat .n3 { background-color: #d9ddf8; }
.heat .n4 { background-color: #d3d3f6; }
.heat .n5 { background-color: #ccbbf0; }
.heat .n6 { background-color: #d967a8; }

.watermark {
    position: absolute;
    right: 8px;
    bottom: 9px;
    display: flex;
    align-items: center;
    gap: 5px;
    font-size: 23.8px;
    line-height: 36px;
    white-space: nowrap;
    color: rgba(255, 255, 255, 0.85);
    text-shadow: 1px 1px 2px rgba(40, 60, 90, 0.7);
}

.watermark svg {
    fill: rgba(255, 255, 255, 0.85);
}
```
